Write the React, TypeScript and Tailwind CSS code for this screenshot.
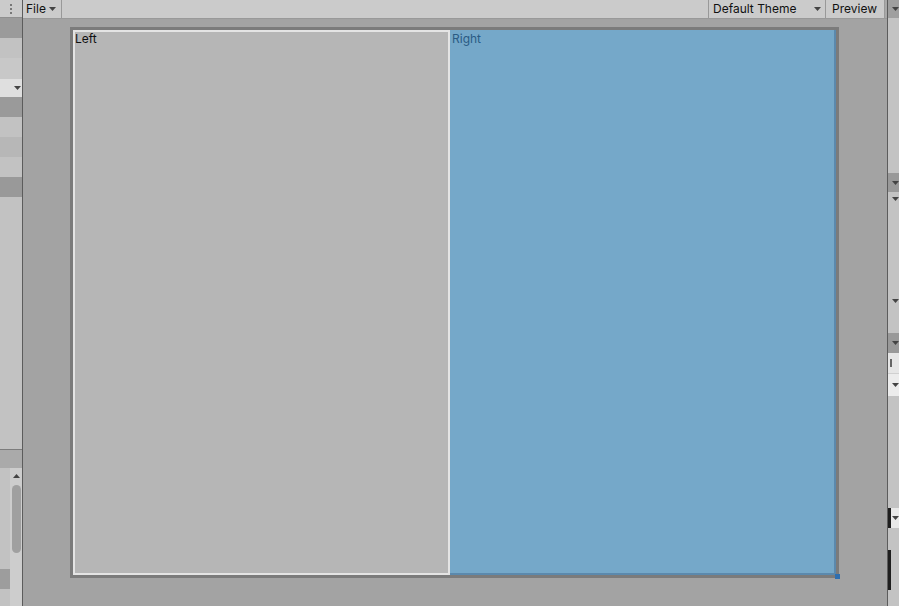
import React from "react";

const Tri = ({ cls = "" }: { cls?: string }) => (
  <svg width="7" height="4" viewBox="0 0 7 4" className={cls}>
    <path d="M0 0H7L3.5 4Z" fill="#444" />
  </svg>
);

export default function App() {
  return (
    <div
      className="w-[899px] h-[606px] flex overflow-hidden bg-[#a3a3a3] text-[12px] text-[#111]"
      style={{ fontFamily: "Inter, 'Liberation Sans', sans-serif" }}
    >
      {/* left pane */}
      <div className="w-[23px] h-full flex flex-col border-r border-[#5c5c5c] bg-[#c2c2c2] shrink-0">
        <div className="h-[18px] bg-[#cbcbcb] border-b border-[#8f8f8f] flex items-center justify-center">
          <div className="flex flex-col gap-[2px]">
            <div className="w-[2px] h-[2px] bg-[#777]" />
            <div className="w-[2px] h-[2px] bg-[#777]" />
            <div className="w-[2px] h-[2px] bg-[#777]" />
          </div>
        </div>
        <div className="h-[20px] bg-[#9b9b9b]" />
        <div className="h-[20px] bg-[#c2c2c2]" />
        <div className="h-[21px] bg-[#c8c8c8]" />
        <div className="h-[18px] bg-[#dfdfdf] flex items-center justify-end pr-[1px]">
          <Tri />
        </div>
        <div className="h-[20px] bg-[#9a9a9a]" />
        <div className="h-[20px] bg-[#c2c2c2]" />
        <div className="h-[20px] bg-[#b7b7b7]" />
        <div className="h-[20px] bg-[#c2c2c2]" />
        <div className="h-[20px] bg-[#999999]" />
        <div className="h-[252px] bg-[#c2c2c2]" />
        <div className="h-[19px] bg-[#aaaaaa] border-t border-[#7c7c7c]" />
        <div className="flex-1 flex">
          <div className="w-[10px] flex flex-col bg-[#c2c2c2]">
            <div className="h-[101px]" />
            <div className="h-[20px] bg-[#9d9d9d]" />
          </div>
          <div className="flex-1 bg-[#cdcdcd] flex flex-col items-center pt-[6px]">
            <svg width="7" height="4" viewBox="0 0 7 4">
              <path d="M0 4H7L3.5 0Z" fill="#444" />
            </svg>
            <div className="mt-[7px] w-[9px] h-[68px] rounded-full bg-[#a0a0a0]" />
          </div>
        </div>
      </div>

      {/* middle */}
      <div className="flex-1 flex flex-col min-w-0">
        <div className="h-[19px] bg-[#cbcbcb] border-b border-[#999] flex items-stretch">
          <div className="flex items-center gap-[3px] pl-[3px] pr-[5px] border-r border-[#999]">
            <span>File</span>
            <Tri />
          </div>
          <div className="flex-1" />
          <div className="w-[118px] flex items-center justify-between pl-[4px] pr-[4px] border-l border-r border-[#999]">
            <span>Default Theme</span>
            <Tri />
          </div>
          <div className="w-[59px] flex items-center pl-[6px] border-r border-[#999]">
            <span>Preview</span>
          </div>
          <div className="w-[2px] bg-[#a8a8a8]" />
        </div>
        <div className="flex-1 bg-[#a3a3a3] pl-[47px] pt-[8px]">
          <div className="relative w-[769px] h-[551px] border-[3px] border-[#7b7b7b] flex">
            <div className="w-[377px] h-full bg-[#b6b6b6] border-2 border-[#e4e4e4] leading-[14px]">
              Left
            </div>
            <div className="flex-1 h-full bg-[#75a8c9] border-r-2 border-b-2 border-[#5b89ad] text-[#2a5b84] leading-[14px] pl-[2px] pt-[2px]">
              Right
            </div>
            <div className="absolute right-[-4px] bottom-[-4px] w-[5px] h-[5px] bg-[#2f6fb0]" />
          </div>
        </div>
      </div>

      {/* right pane */}
      <div className="w-[12px] h-full flex flex-col border-l border-[#5c5c5c] bg-[#c3c3c3] shrink-0">
        <div className="h-[18px] bg-[#9f9f9f] flex items-start justify-end pt-[7px]">
          <Tri />
        </div>
        <div className="h-[155px]" />
        <div className="h-[19px] bg-[#999] flex items-center justify-end">
          <Tri />
        </div>
        <div className="h-[141px] relative">
          <div className="absolute right-0 top-[5px]"><Tri /></div>
          <div className="absolute right-0 top-[107px]"><Tri /></div>
        </div>
        <div className="h-[20px] bg-[#999] flex items-center justify-end">
          <Tri />
        </div>
        <div className="h-[20px] bg-[#e6e6e6] flex items-center pl-[2px]">
          <div className="w-[2px] h-[8px] bg-[#666]" />
        </div>
        <div className="h-[23px] bg-[#ececec] border-t border-[#d0d0d0] flex items-center justify-end">
          <Tri />
        </div>
        <div className="h-[112px]" />
        <div className="h-[20px] flex">
          <div className="w-[3px] bg-[#1e1e1e]" />
          <div className="flex-1 bg-[#e8e8e8] flex items-center justify-end">
            <Tri />
          </div>
        </div>
        <div className="h-[22px]" />
        <div className="h-[40px] flex">
          <div className="w-[3px] bg-[#1e1e1e]" />
        </div>
        <div className="flex-1" />
      </div>
    </div>
  );
}
